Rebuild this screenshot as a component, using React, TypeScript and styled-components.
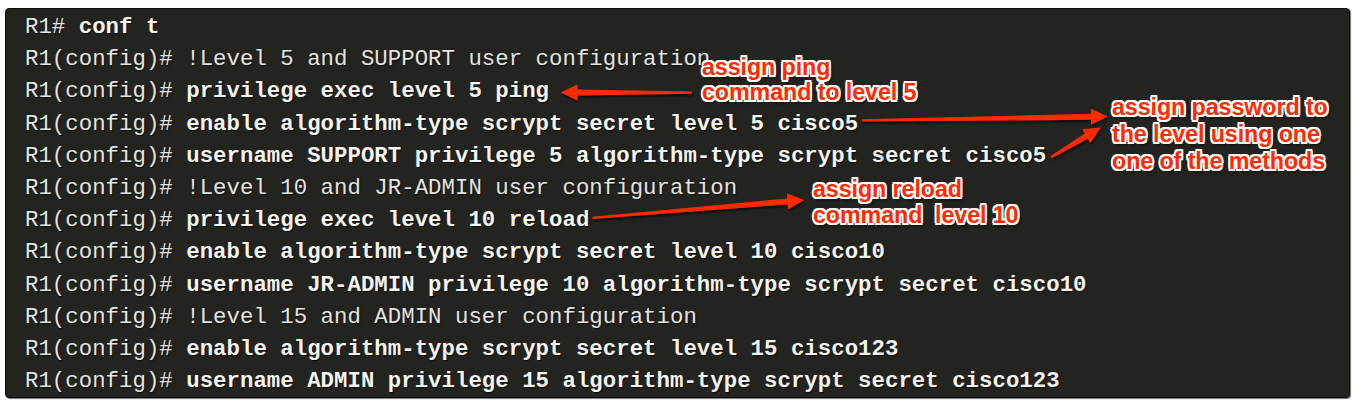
import React from "react";
import styled, { createGlobalStyle } from "styled-components";

const Global = createGlobalStyle`
  html, body { margin: 0; padding: 0; background: #ffffff; }
  body { width: 1358px; height: 406px; overflow: hidden; }
`;

const Panel = styled.div`
  position: relative;
  box-sizing: border-box;
  margin: 8px 0 0 5px;
  width: 1345px;
  height: 390px;
  padding: 2px 0 0 19px;
  background: #23241f;
  border: 1px solid #0b0b0a;
  border-radius: 4px;
  box-shadow: 1px 1px 1px rgba(0, 0, 0, 0.55);
  display: flex;
  flex-direction: column;
`;

const Line = styled.div`
  font-family: "Liberation Mono", "Courier New", monospace;
  font-size: 22.4px;
  line-height: 32.2px;
  height: 32.2px;
  white-space: pre;
  color: #e4e4e2;
  text-shadow: 1px 1px 1px rgba(0, 0, 0, 0.6);
`;

const Cmd = styled.span<{ $bold: boolean }>`
  font-weight: ${(p) => (p.$bold ? 700 : 400)};
  color: ${(p) => (p.$bold ? "#f4f4f2" : "#e4e4e2")};
`;

const Note = styled.div<{ $left: number; $top: number; $lh: number }>`
  position: absolute;
  left: ${(p) => p.$left}px;
  top: ${(p) => p.$top}px;
  font-family: "Liberation Sans", Arial, sans-serif;
  font-weight: 700;
  font-size: 23.3px;
  line-height: ${(p) => p.$lh}px;
  letter-spacing: -0.1px;
  white-space: pre;
  color: #ff2a00;
  text-shadow:
    -2px 0 0 #fff, 2px 0 0 #fff, 0 -2px 0 #fff, 0 2px 0 #fff,
    -1.6px -1.6px 0 #fff, 1.6px -1.6px 0 #fff, -1.6px 1.6px 0 #fff, 1.6px 1.6px 0 #fff,
    2px 3px 3px rgba(0, 0, 0, 0.8);
`;

const Overlay = styled.svg`
  position: absolute;
  left: 0;
  top: 0;
  width: 100%;
  height: 100%;
  pointer-events: none;
  overflow: visible;
`;

type L = { prompt: string; cmd: string; bold: boolean };

const lines: L[] = [
  { prompt: "R1# ", cmd: "conf t", bold: true },
  { prompt: "R1(config)# ", cmd: "!Level 5 and SUPPORT user configuration", bold: false },
  { prompt: "R1(config)# ", cmd: "privilege exec level 5 ping", bold: true },
  { prompt: "R1(config)# ", cmd: "enable algorithm-type scrypt secret level 5 cisco5", bold: true },
  { prompt: "R1(config)# ", cmd: "username SUPPORT privilege 5 algorithm-type scrypt secret cisco5", bold: true },
  { prompt: "R1(config)# ", cmd: "!Level 10 and JR-ADMIN user configuration", bold: false },
  { prompt: "R1(config)# ", cmd: "privilege exec level 10 reload", bold: true },
  { prompt: "R1(config)# ", cmd: "enable algorithm-type scrypt secret level 10 cisco10", bold: true },
  { prompt: "R1(config)# ", cmd: "username JR-ADMIN privilege 10 algorithm-type scrypt secret cisco10", bold: true },
  { prompt: "R1(config)# ", cmd: "!Level 15 and ADMIN user configuration", bold: false },
  { prompt: "R1(config)# ", cmd: "enable algorithm-type scrypt secret level 15 cisco123", bold: true },
  { prompt: "R1(config)# ", cmd: "username ADMIN privilege 15 algorithm-type scrypt secret cisco123", bold: true },
];

type Arrow = { x1: number; y1: number; x2: number; y2: number };

const arrows: Arrow[] = [
  { x1: 687, y1: 84, x2: 555, y2: 84 },
  { x1: 858, y1: 112, x2: 1105, y2: 108 },
  { x1: 1048, y1: 149, x2: 1098, y2: 119 },
  { x1: 587, y1: 210, x2: 800, y2: 192 },
];

function arrowPoints(a: Arrow): string {
  const dx = a.x2 - a.x1;
  const dy = a.y2 - a.y1;
  const len = Math.hypot(dx, dy);
  const ux = dx / len;
  const uy = dy / len;
  const nx = -uy;
  const ny = ux;
  const headLen = 17;
  const tail = 2.5;
  const shaft = 6;
  const head = 16;
  const bx = a.x2 - ux * headLen;
  const by = a.y2 - uy * headLen;
  const p = (x: number, y: number, w: number, s: number) =>
    `${(x + nx * w * s / 2).toFixed(1)},${(y + ny * w * s / 2).toFixed(1)}`;
  return [
    p(a.x1, a.y1, tail, 1),
    p(bx, by, shaft, 1),
    p(bx, by, head, 1),
    `${a.x2},${a.y2}`,
    p(bx, by, head, -1),
    p(bx, by, shaft, -1),
    p(a.x1, a.y1, tail, -1),
  ].join(" ");
}

export default function App() {
  return (
    <>
      <Global />
      <Panel>
        {lines.map((l, i) => (
          <Line key={i}>
            {l.prompt}
            <Cmd $bold={l.bold}>{l.cmd}</Cmd>
          </Line>
        ))}
        <Overlay viewBox="0 0 1345 390">
          <defs>
            <filter id="ash" x="-10%" y="-50%" width="120%" height="200%">
              <feDropShadow dx="1" dy="2" stdDeviation="1.2" floodColor="#000" floodOpacity="0.75" />
            </filter>
          </defs>
          {arrows.map((a, i) => (
            <polygon key={i} points={arrowPoints(a)} fill="#ff2a00" filter="url(#ash)" />
          ))}
        </Overlay>
        <Note $left={696} $top={46} $lh={25}>{"assign ping\ncommand to level 5"}</Note>
        <Note $left={1106} $top={85} $lh={27}>{"assign password to\nthe level using one\none of the methods"}</Note>
        <Note $left={807} $top={167} $lh={26}>{"assign reload\ncommand  level 10"}</Note>
      </Panel>
    </>
  );
}
